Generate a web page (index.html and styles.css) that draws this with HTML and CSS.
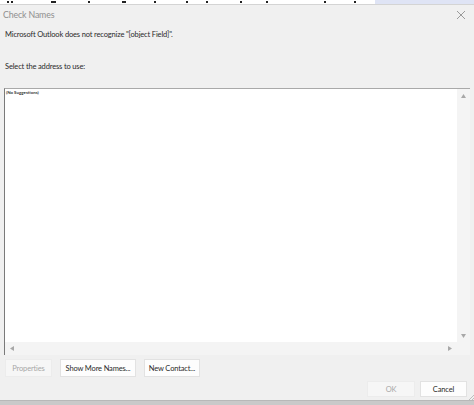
FILE: index.html
```html
<!DOCTYPE html>
<html>
<head>
<meta charset="utf-8">
<link rel="stylesheet" href="styles.css">
</head>
<body>
<div class="topstrip">
  <div class="topstrip-marks">
    <i class="m m1"></i><i class="m m2"></i><i class="m m3"></i><i class="m m4"></i><i class="m m5"></i><i class="m m6"></i><i class="m m7"></i><i class="m m8"></i><i class="m m9"></i><i class="m m10"></i><i class="m m11"></i><i class="m m12"></i>
  </div>
  <div class="topstrip-blue"></div>
</div>
<div class="dialog">
  <div class="titlebar">
    <span class="title">Check Names</span>
    <svg class="close" width="10" height="10" viewBox="0 0 10 10"><path d="M1 1 L9 9 M9 1 L1 9" stroke="#9a9a9a" stroke-width="1" fill="none"/></svg>
  </div>
  <div class="msg first">Microsoft Outlook does not recognize "[object Field]".</div>
  <div class="msg select">Select the address to use:</div>
  <div class="listwrap">
    <div class="listrow">
      <div class="list"><span class="nosugg">(No Suggestions)</span></div>
      <div class="vscroll">
        <svg width="5" height="4" viewBox="0 0 5 4"><path d="M0 4 L2.5 0 L5 4Z" fill="#a8a8a8"/></svg>
        <svg width="5" height="4" viewBox="0 0 5 4"><path d="M0 0 L2.5 4 L5 0Z" fill="#a8a8a8"/></svg>
      </div>
    </div>
    <div class="hscroll">
      <svg width="4" height="5" viewBox="0 0 4 5"><path d="M4 0 L0 2.5 L4 5Z" fill="#a8a8a8"/></svg>
      <svg width="4" height="5" viewBox="0 0 4 5"><path d="M0 0 L4 2.5 L0 5Z" fill="#a8a8a8"/></svg>
    </div>
  </div>
  <div class="btnrow">
    <div class="btn disabled props">Properties</div>
    <div class="btn more">Show More Names...</div>
    <div class="btn newc">New Contact...</div>
  </div>
  <div class="btnrow right">
    <div class="btn disabled ok">OK</div>
    <div class="btn cancel">Cancel</div>
  </div>
  <svg class="grip" width="6" height="6" viewBox="0 0 6 6"><path d="M6 1 L1 6 M6 4 L4 6" stroke="#b0b0b0" stroke-width="0.8"/></svg>
</div>
</body>
</html>
```

FILE: styles.css
```css
html, body {
  margin: 0;
  padding: 0;
}
body {
  width: 474px;
  height: 405px;
  overflow: hidden;
  background: #c9c9c9;
  font-family: "Lato", "Open Sans", sans-serif;
}
.topstrip {
  display: flex;
  height: 4px;
  overflow: hidden;
  background: #ffffff;
  border-bottom: 1px solid #d4d4d4;
}
.topstrip-marks {
  flex: 1;
  display: flex;
  align-items: flex-start;
}
.m {
  display: block;
  height: 2px;
  background: #222;
  margin-top: 1px;
}
.m1 { margin-left: 7px; width: 2px; }
.m2 { margin-left: 2px; width: 2px; }
.m3 { margin-left: 38px; width: 5px; }
.m4 { margin-left: 32px; width: 2px; }
.m5 { margin-left: 32px; width: 4px; }
.m6 { margin-left: 28px; width: 2px; }
.m7 { margin-left: 30px; width: 2px; }
.m8 { margin-left: 18px; width: 2px; }
.m9 { margin-left: 32px; width: 2px; }
.m10 { margin-left: 24px; width: 2px; }
.m11 { margin-left: 56px; width: 2px; }
.m12 { margin-left: 28px; width: 2px; }
.topstrip-blue {
  width: 99px;
  background: #dfe4f5;
}
.dialog {
  position: relative;
  height: 396px;
  background: #f0f0f0;
  box-sizing: border-box;
  border-bottom: 1px solid #b8b8b8;
}
.titlebar {
  display: flex;
  align-items: center;
  justify-content: space-between;
  height: 19px;
  padding: 0 8px 0 3px;
}
.title {
  font-size: 8.8px;
  letter-spacing: -0.15px;
  color: #8f8f8f;
}
.close {
  display: block;
}
.msg {
  font-size: 7.5px;
  letter-spacing: -0.15px;
  color: #2a2a2a;
  padding-left: 5px;
  line-height: 12px;
  height: 12px;
}
.msg.first {
  margin-top: 5px;
}
.select {
  margin-top: 20px;
}
.listwrap {
  margin: 15px 0 0 4px;
  width: 466px;
  border-top: 1px solid #a9a9a9;
  border-left: 1px solid #7a7a7a;
  box-sizing: border-box;
}
.listrow {
  display: flex;
  height: 253px;
}
.list {
  flex: 1;
  background: #ffffff;
  padding: 1px 0 0 1px;
}
.nosugg {
  display: block;
  font-size: 4.4px;
  font-weight: 700;
  color: #333;
  line-height: 5px;
}
.vscroll {
  width: 13px;
  background: #f4f4f4;
  display: flex;
  flex-direction: column;
  justify-content: space-between;
  align-items: center;
  padding: 5px 0 4px 0;
}
.vscroll svg, .hscroll svg {
  display: block;
}
.hscroll {
  height: 13px;
  background: #f4f4f4;
  display: flex;
  align-items: center;
  justify-content: space-between;
  padding: 0 18px 0 5px;
}
.btnrow {
  display: flex;
  gap: 8px;
  padding-left: 5px;
  margin-top: 4px;
}
.btnrow.right {
  justify-content: flex-end;
  padding-right: 7px;
  gap: 5px;
  margin-top: 4px;
}
.btn {
  height: 18px;
  display: flex;
  align-items: center;
  justify-content: center;
  font-size: 7.5px;
  letter-spacing: -0.15px;
  color: #2a2a2a;
  background: #fdfdfd;
  border: 1px solid #e2e2e2;
  box-sizing: border-box;
}
.btn.disabled {
  background: #f6f6f6;
  color: #a8a8a8;
  border-color: #ececec;
}
.props { width: 47px; }
.more { width: 76px; }
.newc { width: 56px; }
.ok { width: 48px; height: 16px; }
.cancel { width: 47px; height: 16px; }
.grip {
  position: absolute;
  right: 0;
  bottom: 0;
}
```
